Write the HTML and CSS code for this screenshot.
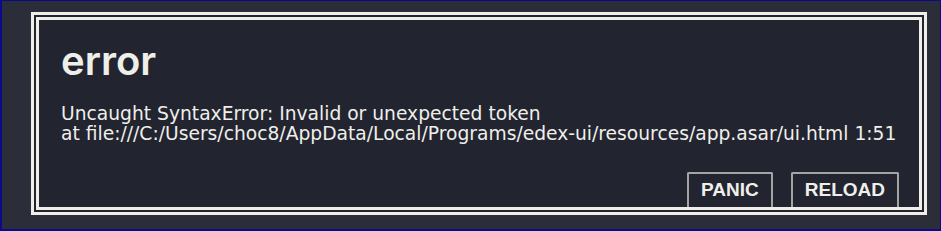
FILE: index.html
```html
<!DOCTYPE html>
<html>
<head>
<meta charset="utf-8">
<link rel="stylesheet" href="styles.css">
</head>
<body>
<div class="frame">
  <div class="modal">
    <div class="modal-inner">
      <h1 class="title">error</h1>
      <p class="message">Uncaught SyntaxError: Invalid or unexpected token<br>at file:///C:/Users/choc8/AppData/Local/Programs/edex-ui/resources/app.asar/ui.html 1:51</p>
      <div class="actions">
        <button class="btn">PANIC</button>
        <button class="btn">RELOAD</button>
      </div>
    </div>
  </div>
</div>
</body>
</html>
```
FILE: styles.css
```css
html, body {
  margin: 0;
  padding: 0;
}
body {
  width: 941px;
  height: 231px;
  overflow: hidden;
  background: #2b2d38;
}
.frame {
  box-sizing: border-box;
  width: 941px;
  height: 231px;
  border: 1px solid #0a0a8c;
  border-width: 1px 1px 2px 2px;
  padding: 11px 0 0 29px;
  background: #2b2d38;
}
.modal {
  box-sizing: border-box;
  width: 896px;
  height: 203px;
  border: 3px solid #efefea;
  padding: 2px;
  background: #222430;
}
.modal-inner {
  box-sizing: border-box;
  height: 100%;
  border: 3px solid #efefea;
  padding: 18px 20px 0 22px;
  display: flex;
  flex-direction: column;
  font-family: "DejaVu Sans", sans-serif;
  color: #efefea;
}
.title {
  margin: 0;
  font-family: Inter, "DejaVu Sans", sans-serif;
  font-size: 40px;
  font-weight: 600;
  line-height: 45px;
}
.message {
  margin: 21px 0 0;
  font-size: 18.7px;
  line-height: 20px;
  white-space: nowrap;
}
.actions {
  margin-top: auto;
  display: flex;
  justify-content: flex-end;
  gap: 18px;
}
.btn {
  box-sizing: border-box;
  height: 35px;
  padding: 0 12px 2px;
  border: 2px solid #a4a4a4;
  border-bottom: 0;
  border-radius: 2px 2px 0 0;
  background: transparent;
  color: #efefea;
  font-family: "Liberation Sans", Arial, sans-serif;
  font-weight: bold;
  font-size: 19px;
}
```
